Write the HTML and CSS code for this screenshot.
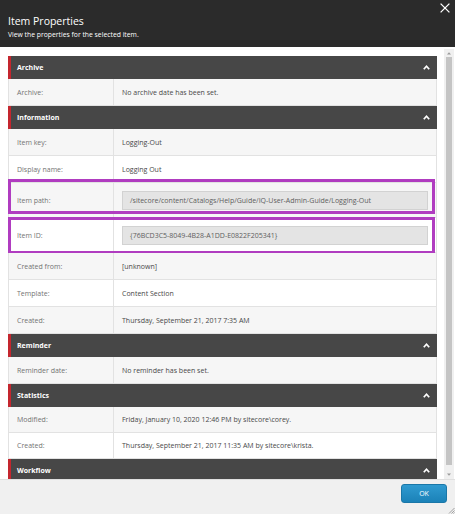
FILE: index.html
```html
<!DOCTYPE html>
<html lang="en">
<head>
<meta charset="utf-8">
<title>Item Properties</title>
<link rel="stylesheet" href="styles.css">
</head>
<body>
<div class="dialog">
  <header class="titlebar">
    <div class="title">Item Properties</div>
    <div class="subtitle">View the properties for the selected item.</div>
    <button class="close" aria-label="Close">
      <svg width="10" height="10" viewBox="0 0 10 10"><path d="M0.6 0.6 L9.4 9.4 M9.4 0.6 L0.6 9.4" stroke="#fff" stroke-width="1.3" fill="none"/></svg>
    </button>
  </header>

  <div class="main">
    <div class="content">
      <section class="group">
        <div class="group-head"><span>Archive</span><svg class="chev" width="7" height="5" viewBox="0 0 7 5"><path d="M0.8 4.3 L3.5 1.3 L6.2 4.3" fill="none" stroke="#fff" stroke-width="1.7"/></svg></div>
        <div class="row odd"><div class="label">Archive:</div><div class="value">No archive date has been set.</div></div>
      </section>

      <section class="group">
        <div class="group-head"><span>Information</span><svg class="chev" width="7" height="5" viewBox="0 0 7 5"><path d="M0.8 4.3 L3.5 1.3 L6.2 4.3" fill="none" stroke="#fff" stroke-width="1.7"/></svg></div>
        <div class="row odd"><div class="label">Item key:</div><div class="value">Logging-Out</div></div>
        <div class="row"><div class="label">Display name:</div><div class="value">Logging Out</div></div>
        <div class="row odd tall path-row"><div class="label">Item path:</div><div class="value"><div class="input">/sitecore/content/Catalogs/Help/Guide/IQ-User-Admin-Guide/Logging-Out</div></div><span class="mark mark-path"></span></div>
        <div class="row tall id-row"><div class="label">Item ID:</div><div class="value"><div class="input">{76BCD3C5-8049-4B28-A1DD-E0822F205341}</div></div><span class="mark mark-id"></span></div>
        <div class="row odd"><div class="label">Created from:</div><div class="value">[unknown]</div></div>
        <div class="row"><div class="label">Template:</div><div class="value">Content Section</div></div>
        <div class="row odd"><div class="label">Created:</div><div class="value">Thursday, September 21, 2017 7:35 AM</div></div>
      </section>

      <section class="group">
        <div class="group-head"><span>Reminder</span><svg class="chev" width="7" height="5" viewBox="0 0 7 5"><path d="M0.8 4.3 L3.5 1.3 L6.2 4.3" fill="none" stroke="#fff" stroke-width="1.7"/></svg></div>
        <div class="row odd"><div class="label">Reminder date:</div><div class="value">No reminder has been set.</div></div>
      </section>

      <section class="group">
        <div class="group-head"><span>Statistics</span><svg class="chev" width="7" height="5" viewBox="0 0 7 5"><path d="M0.8 4.3 L3.5 1.3 L6.2 4.3" fill="none" stroke="#fff" stroke-width="1.7"/></svg></div>
        <div class="row odd short"><div class="label">Modified:</div><div class="value">Friday, January 10, 2020 12:46 PM by sitecore\corey.</div></div>
        <div class="row short"><div class="label">Created:</div><div class="value">Thursday, September 21, 2017 11:35 AM by sitecore\krista.</div></div>
      </section>

      <section class="group">
        <div class="group-head"><span>Workflow</span><svg class="chev" width="7" height="5" viewBox="0 0 7 5"><path d="M0.8 4.3 L3.5 1.3 L6.2 4.3" fill="none" stroke="#fff" stroke-width="1.7"/></svg></div>
      </section>
    </div>

    <div class="scrollbar">
      <svg class="arrow" width="10" height="8" viewBox="0 0 10 8"><path d="M3 5.5 L5 3.2 L7 5.5 Z" fill="#9a9a9a"/></svg>
      <div class="track"><div class="thumb"></div></div>
      <svg class="arrow" width="10" height="8" viewBox="0 0 10 8"><path d="M3 2.5 L5 4.8 L7 2.5 Z" fill="#9a9a9a"/></svg>
    </div>
  </div>

  <footer class="footer">
    <button class="ok">OK</button>
    <svg class="grip" width="7" height="7" viewBox="0 0 7 7"><path d="M6.5 1 L1 6.5 M6.5 3.5 L3.5 6.5 M6.5 5.5 L5.5 6.5" stroke="#8a8a8a" stroke-width="0.8" fill="none"/></svg>
  </footer>
</div>
</body>
</html>
```

FILE: styles.css
```css
html, body {
  margin: 0;
  padding: 0;
}

body {
  font-family: "Open Sans", "DejaVu Sans", sans-serif;
  background: #ffffff;
  width: 455px;
  height: 514px;
  overflow: hidden;
}

.dialog {
  display: flex;
  flex-direction: column;
  height: 514px;
}

.titlebar {
  position: relative;
  height: 47px;
  flex: none;
  box-sizing: border-box;
  background: #2b2b2b;
  color: #ffffff;
  padding: 14px 8px 0;
}

.title {
  font-size: 10.5px;
  line-height: 15px;
}

.subtitle {
  font-size: 6.8px;
  line-height: 9px;
  margin-top: 1px;
}

.close {
  position: absolute;
  top: 3px;
  right: 5px;
  width: 10px;
  height: 10px;
  padding: 0;
  border: 0;
  background: transparent;
  display: block;
}

.close svg {
  display: block;
}

.main {
  flex: 1;
  min-height: 0;
  display: flex;
  overflow: hidden;
}

.content {
  width: 429px;
  margin-left: 8px;
  padding-top: 9px;
  overflow: hidden;
}

.group-head {
  height: 23px;
  box-sizing: border-box;
  background: #474747;
  border-left: 3px solid #c4262e;
  display: flex;
  align-items: center;
  justify-content: space-between;
  padding: 0 7px 0 6px;
  color: #ffffff;
  font-weight: 700;
  font-size: 7px;
}

.chev {
  display: block;
}

.row {
  position: relative;
  display: flex;
  height: 27px;
  box-sizing: border-box;
  border: 1px solid #e2e2e2;
  border-top: 0;
  background: #ffffff;
  font-size: 7px;
}

.row.odd {
  background: #f6f6f6;
}

.row.short {
  height: 26px;
}

.row.tall {
  height: 35px;
}

.label {
  width: 105px;
  flex: none;
  box-sizing: border-box;
  padding-left: 8px;
  border-right: 1px solid #e2e2e2;
  display: flex;
  align-items: center;
  color: #737373;
}

.value {
  flex: 1;
  min-width: 0;
  padding: 0 8px;
  display: flex;
  align-items: center;
  color: #484848;
  white-space: nowrap;
}

.input {
  flex: 1;
  height: 19px;
  box-sizing: border-box;
  background: #e4e4e4;
  border: 1px solid #d2d2d2;
  padding-left: 7px;
  display: flex;
  align-items: center;
  color: #5e5e5e;
}

.mark {
  position: absolute;
  left: -1px;
  right: 1px;
  box-sizing: border-box;
  border: 3px solid #b03cc0;
  pointer-events: none;
}

.mark-path {
  top: -4px;
  height: 35px;
}

.mark-id {
  top: -1px;
  height: 37px;
}

.scrollbar {
  width: 10px;
  flex: none;
  margin-left: 7px;
  margin-top: 2px;
  display: flex;
  flex-direction: column;
  background: #f0f0f0;
}

.arrow {
  display: block;
  flex: none;
}

.track {
  flex: 1;
  padding: 0 2px;
  display: flex;
}

.thumb {
  flex: 1;
  background: #c4c4c4;
  margin: 0 0 6px;
}

.footer {
  position: relative;
  height: 35px;
  flex: none;
  box-sizing: border-box;
  background: #f0f0f0;
  border-top: 1px solid #e0e0e0;
  display: flex;
  justify-content: flex-end;
  align-items: flex-start;
  padding: 4px 8px 0 0;
}

.ok {
  width: 46px;
  height: 19px;
  box-sizing: border-box;
  border: 1px solid #1a77a8;
  border-radius: 3px;
  background: linear-gradient(#2f9ad0, #1b82b8);
  color: #ffffff;
  font-family: "Open Sans", "DejaVu Sans", sans-serif;
  font-size: 7px;
  padding: 0;
}

.grip {
  position: absolute;
  right: 0;
  bottom: 0;
  display: block;
}
```
